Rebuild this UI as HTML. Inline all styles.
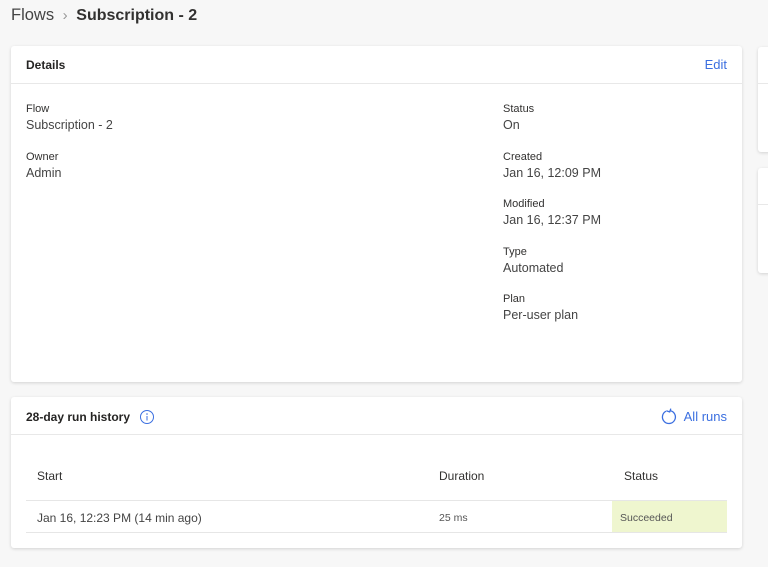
<!DOCTYPE html>
<html><head><meta charset="utf-8"><style>
*{box-sizing:border-box;margin:0;padding:0}
body{width:768px;height:567px;overflow:hidden;background:#f7f7f7;font-family:"Liberation Sans",sans-serif;color:#323130;position:relative}
.card{position:absolute;background:#fff;border-radius:3px;box-shadow:0 1px 3px rgba(0,0,0,.15)}
.hd{height:38px;border-bottom:1px solid #e8e8e8;display:flex;align-items:center;padding:0 15px;font-weight:bold;font-size:12px;color:#252423}
.lnk{color:#3b6fe0;font-weight:normal;font-size:13px;margin-left:auto}
.f{position:absolute;font-size:11px;color:#323130}
.f b{display:block;font-weight:normal;font-size:11px;line-height:14px}
.f span{display:block;font-size:12.5px;color:#444;line-height:18px}
.t{position:absolute;font-size:12px;color:#323130}
</style></head><body>
<div style="position:absolute;left:11px;top:6px;font-size:16.5px;color:#444">Flows <span style="color:#999;font-size:15px;margin:0 4px;font-weight:lighter">&#x203A;</span> <span style="color:#323130;font-weight:bold;font-size:16px">Subscription - 2</span></div>

<div class="card" style="left:11px;top:46px;width:731px;height:336px">
<div class="hd">Details<span class="lnk">Edit</span></div>
<div class="f" style="left:15px;top:56px"><b>Flow</b><span>Subscription - 2</span></div>
<div class="f" style="left:15px;top:104px"><b>Owner</b><span>Admin</span></div>
<div class="f" style="left:492px;top:56px"><b>Status</b><span>On</span></div>
<div class="f" style="left:492px;top:104px"><b>Created</b><span>Jan 16, 12:09 PM</span></div>
<div class="f" style="left:492px;top:151px"><b>Modified</b><span>Jan 16, 12:37 PM</span></div>
<div class="f" style="left:492px;top:199px"><b>Type</b><span>Automated</span></div>
<div class="f" style="left:492px;top:246px"><b>Plan</b><span>Per-user plan</span></div>
</div>

<div class="card" style="left:758px;top:47px;width:30px;height:105px"><div style="height:37px;border-bottom:1px solid #e8e8e8"></div></div>
<div class="card" style="left:758px;top:168px;width:30px;height:105px"><div style="height:37px;border-bottom:1px solid #e8e8e8"></div></div>

<div class="card" style="left:11px;top:397px;width:731px;height:151px">
<div class="hd" style="padding-top:2px">28-day run history
<svg width="16" height="16" viewBox="0 0 16 16" style="margin-left:9px"><circle cx="8" cy="8" r="6.5" fill="none" stroke="#3b6fe0" stroke-width="1"/><circle cx="8" cy="5" r=".8" fill="#3b6fe0"/><path d="M8 7v4.5" stroke="#3b6fe0" stroke-width="1"/></svg>
<span class="lnk" style="display:flex;align-items:center"><svg width="18" height="18" viewBox="0 0 18 18" style="margin-right:6px"><path d="M6 3.2A6.5 6.5 0 1 0 10 2.6" fill="none" stroke="#3b6fe0" stroke-width="1.3"/><path d="M10 0.5v3.5h-3.5" fill="none" stroke="#3b6fe0" stroke-width="1.3" transform="rotate(20 10 3)"/></svg>All runs</span></div>
<div class="t" style="left:26px;top:72px">Start</div>
<div class="t" style="left:428px;top:72px">Duration</div>
<div class="t" style="left:613px;top:72px">Status</div>
<div style="position:absolute;left:15px;top:103px;width:701px;height:1px;background:#e6e6e6"></div>
<div style="position:absolute;left:601px;top:104px;width:115px;height:31px;background:#eff6cf"></div>
<div class="t" style="left:26px;top:114px;color:#444">Jan 16, 12:23 PM (14 min ago)</div>
<div class="t" style="left:428px;top:115px;font-size:10.5px;color:#555">25 ms</div>
<div class="t" style="left:609px;top:115px;font-size:10.5px;color:#555">Succeeded</div>
<div style="position:absolute;left:15px;top:135px;width:701px;height:1px;background:#e6e6e6"></div>
</div>
</body></html>
